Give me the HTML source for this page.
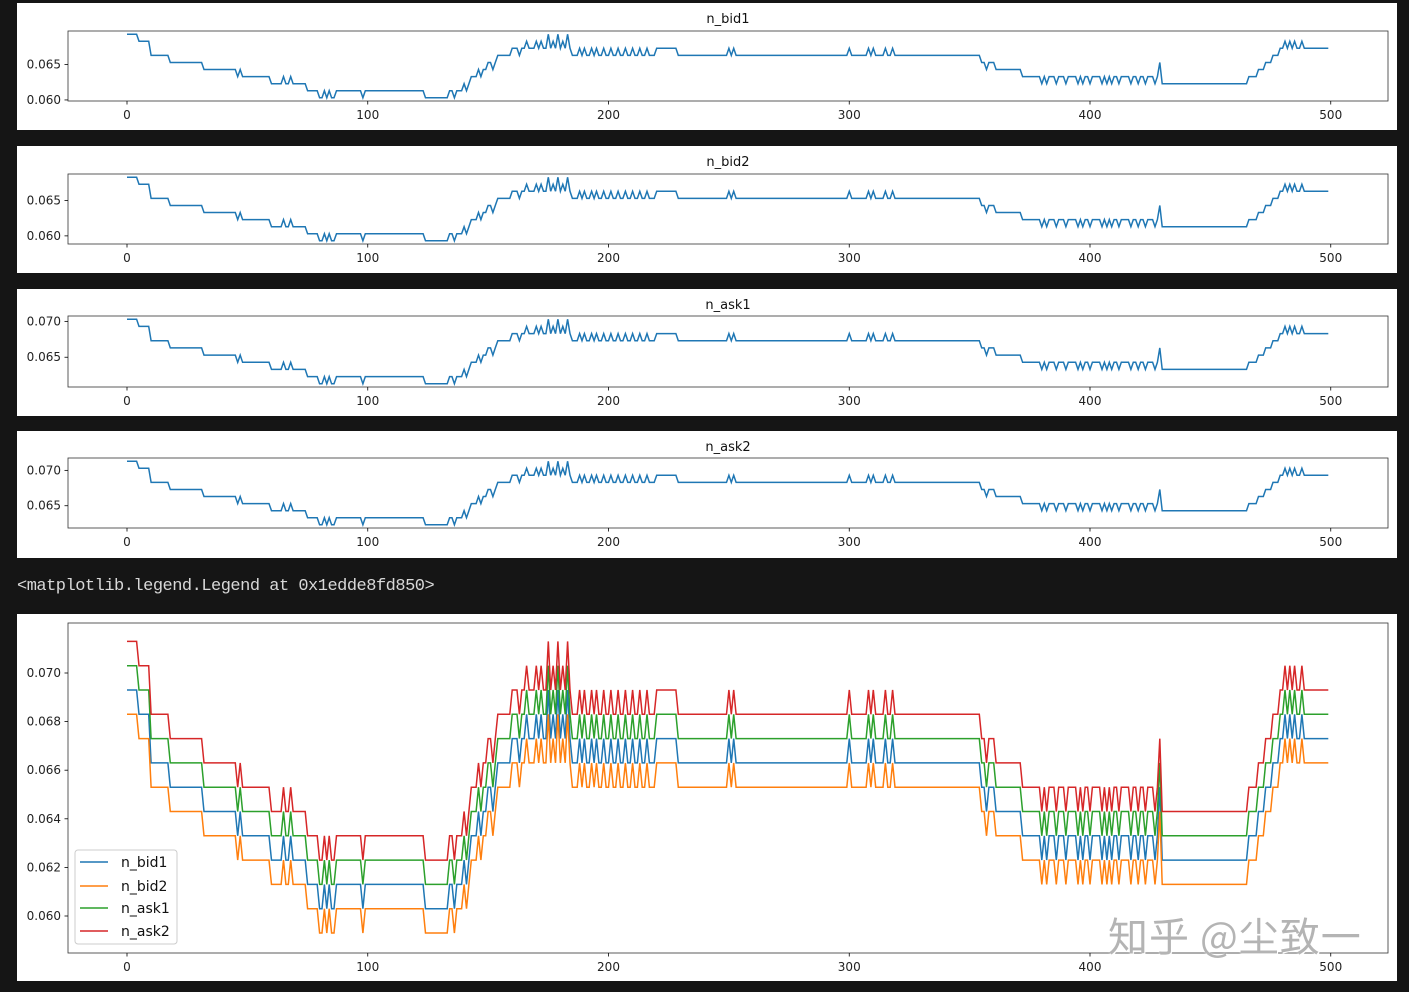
<!DOCTYPE html>
<html><head><meta charset="utf-8"><style>
html,body{margin:0;padding:0;background:#151515;width:1409px;height:992px;overflow:hidden}
svg{position:absolute;left:0;top:0}
.msg{position:absolute;left:17px;top:577px;color:#d8d8d8;font:17px "Liberation Mono","Noto Serif CJK SC",monospace;letter-spacing:-0.5px}
.wm{position:absolute;left:1108px;top:905px;font:40px "Noto Sans CJK SC","WenQuanYi Zen Hei",sans-serif;color:#b4b4b4;text-shadow:0 0 2px #fff,1px 1px 0 #fff;letter-spacing:1px}
</style></head><body>
<svg id="s" width="1409" height="992" xmlns="http://www.w3.org/2000/svg" font-family="DejaVu Sans, Liberation Sans, sans-serif" font-size="12"></svg>
<div class="msg">&lt;matplotlib.legend.Legend at 0x1edde8fd850&gt;</div>
<div class="wm">知乎 @尘致一</div>
<script>
(function(){
var base=[[0,9],[5,8],[10,6],[18,5],[31,4],[46,3],[60,2],[75,1],[80,0],[87,1],[124,0],[134,1],[140,2],[143,3],[146,4],[150,5],[154,6],[160,7],[185,6],[220,7],[229,6],[355,5],[361,4],[372,3],[430,2],[466,3],[470,4],[473,5],[476,6],[479,7]];
var spikes={31:5,47:4,65:3,68:3,82:1,84:1,98:0,108:1,133:0,136:0,138:1,141:1,147:3,152:4,158:6,163:6,166:8,168:7,170:8,172:8,175:9,177:8,179:9,181:8,183:9,188:7,190:7,193:7,195:7,198:7,201:7,204:7,207:7,210:7,213:7,216:7,250:7,252:7,300:7,308:7,310:7,315:7,318:7,357:4,380:2,382:2,386:2,390:2,395:2,397:2,400:2,405:2,407:2,409:2,412:2,417:2,420:2,423:2,427:2,429:5,481:8,483:8,485:8,488:8};
var d=[];for(var t=0;t<=499;t++){var k=0;for(var i=0;i<base.length;i++)if(base[i][0]<=t)k=base[i][1];if(spikes[t]!==undefined)k=spikes[t];d.push(0.0603+k*0.001);}
var C=['#1f77b4','#ff7f0e','#2ca02c','#d62728'],OFF=[0,-0.001,0.001,0.002],N=['n_bid1','n_bid2','n_ask1','n_ask2'];
function X(t){return 127+t*2.4075}
var h='';
function xt(b){var s='';for(var v=0;v<=500;v+=100){var x=X(v);s+='<line x1="'+x+'" y1="'+b+'" x2="'+x+'" y2="'+(b+3.5)+'" stroke="#000" stroke-width="0.8"/><text x="'+x+'" y="'+(b+18)+'" text-anchor="middle" fill="#222">'+v+'</text>';}return s}
function yt(y,l){return '<line x1="64.5" y1="'+y+'" x2="68" y2="'+y+'" stroke="#000" stroke-width="0.8"/><text x="61" y="'+(y+4)+'" text-anchor="end" fill="#222">'+l+'</text>'}
var panels=[[3,31,101],[146,174,244],[289,316,387],[431,458,528]];
var ticks=[[[0.060,'0.060'],[0.065,'0.065']],[[0.060,'0.060'],[0.065,'0.065']],[[0.065,'0.065'],[0.070,'0.070']],[[0.065,'0.065'],[0.070,'0.070']]];
for(var p=0;p<4;p++){var P=panels[p];var lo=0.0603+OFF[p]-0.00045,rng=0.0099,tp=P[1],bot=P[2],H=bot-tp;
h+='<rect x="17" y="'+P[0]+'" width="1380" height="127" fill="#fff"/>';
h+='<text x="728" y="'+(P[0]+20)+'" text-anchor="middle" font-size="13" fill="#111">'+N[p]+'</text>';
var pts=d.map(function(v,t){return X(t).toFixed(1)+','+(bot-(v+OFF[p]-lo)/rng*H).toFixed(1)}).join(' ');
h+='<polyline points="'+pts+'" fill="none" stroke="'+C[0]+'" stroke-width="1.5"/>';
h+='<rect x="68" y="'+tp+'" width="1320" height="'+H+'" fill="none" stroke="#333" stroke-width="0.8"/>';
h+=xt(bot);ticks[p].forEach(function(tk){h+=yt(bot-(tk[0]-lo)/rng*H,tk[1])});}
h+='<rect x="17" y="614" width="1380" height="367" fill="#fff"/>';
function BY(v){return 916-(v-0.060)*24300}
for(var s=0;s<4;s++){var pp=d.map(function(v,t){return X(t).toFixed(1)+','+BY(v+OFF[s]).toFixed(1)}).join(' ');h+='<polyline points="'+pp+'" fill="none" stroke="'+C[s]+'" stroke-width="1.5"/>';}
h+='<rect x="68" y="623" width="1320" height="330" fill="none" stroke="#333" stroke-width="0.8"/>';
h+=xt(953);
for(var j=0;j<6;j++){var v=0.060+j*0.002;h+=yt(BY(v),v.toFixed(3));}
h+='<rect x="75" y="850" width="102" height="94" rx="3" fill="#fff" fill-opacity="0.8" stroke="#ccc"/>';
var ly=[862,886,908,931];for(var s2=0;s2<4;s2++){h+='<line x1="80" y1="'+ly[s2]+'" x2="108" y2="'+ly[s2]+'" stroke="'+C[s2]+'" stroke-width="1.5"/><text x="121" y="'+(ly[s2]+5)+'" font-size="14" fill="#111">'+N[s2]+'</text>';}
document.getElementById('s').innerHTML=h;
})();
</script>
</body></html>
